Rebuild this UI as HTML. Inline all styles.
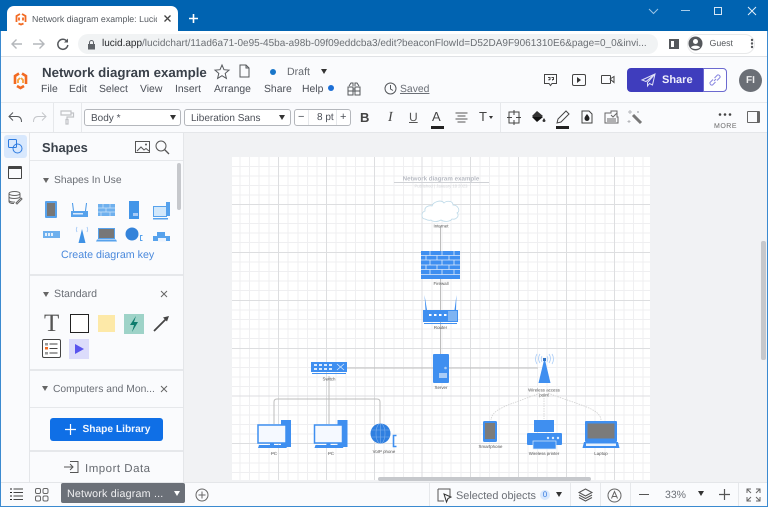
<!DOCTYPE html>
<html><head><meta charset="utf-8"><style>
*{box-sizing:border-box}
html,body{margin:0;padding:0;width:768px;height:507px;overflow:hidden;background:#fff;font-family:"Liberation Sans",sans-serif;text-rendering:geometricPrecision}
.a{position:absolute;white-space:nowrap}
svg{position:absolute;overflow:visible}
.m{top:83px;font-size:10.400px;line-height:13px;color:#4c5058}
.h{font-size:10.300px;color:#6b6f76}
.sel{top:109px;height:17px;border:1px solid #b4b7bc;border-radius:3px;background:#fff;font-size:10px;color:#4c5058;line-height:17px;padding-left:6px}
.ar{width:0;height:0;border-left:3.500px solid transparent;border-right:3.500px solid transparent;border-top:5px solid #333}
.ln{background:#e6e8eb}
</style></head><body>
<div class="a" style="left:0;top:0;width:768px;height:507px;background:#fff;overflow:hidden;filter:blur(.3px)">

<!-- title bar -->
<div class="a" style="left:0;top:0;width:768px;height:31px;background:#0063b1"></div>
<div class="a" style="left:7px;top:6px;width:171px;height:25px;background:#fff;border-radius:7px 7px 0 0"></div>
<svg style="left:15px;top:13px" width="12" height="12" viewBox="0 0 12 12"><path d="M5 1 1.500 3v6M7 1l3.500 2v6M3.500 10.500l2.500 1 2.500-1M4 4.500v3M8 4.500v3" fill="none" stroke="#f26a22" stroke-width="1.800"/></svg>
<div class="a" style="left:32px;top:13px;width:125px;overflow:hidden;font-size:8.800px;color:#555a60;line-height:12px">Network diagram example: Lucid</div>
<svg style="left:163px;top:14px" width="10" height="10"><path d="M1.500 1.500l6 6m0-6l-6 6" stroke="#444" stroke-width="1.300"/></svg>
<svg style="left:188px;top:13px" width="12" height="12"><path d="M5.500 1v9M1 5.500h9" stroke="#fff" stroke-width="1.600"/></svg>
<svg style="left:648px;top:6px" width="12" height="10"><path d="M1 3l4.500 4.500L10 3" fill="none" stroke="#9cc4e6" stroke-width="1"/></svg>
<div class="a" style="left:681px;top:10px;width:9px;height:1px;background:#a9cdea"></div>
<div class="a" style="left:714px;top:7px;width:8px;height:8px;border:1px solid #d6e6f4"></div>
<svg style="left:746px;top:5px" width="12" height="12"><path d="M2 2l8 8m0-8l-8 8" stroke="#e5eff8" stroke-width="1"/></svg>

<!-- address bar -->
<div class="a" style="left:0;top:31px;width:768px;height:26px;background:#fff;border-bottom:1px solid #e0e2e5"></div>
<svg style="left:10px;top:37px" width="14" height="14"><path d="M12 7H2m4.500-4.500L2 7l4.500 4.500" fill="none" stroke="#b4b7bb" stroke-width="1.400"/></svg>
<svg style="left:32px;top:37px" width="14" height="14"><path d="M1 7h10M7.500 2.500 12 7l-4.500 4.500" fill="none" stroke="#b4b7bb" stroke-width="1.400"/></svg>
<svg style="left:56px;top:37px" width="14" height="14"><path d="M11 4.500A5 5 0 1 0 11.800 8" fill="none" stroke="#55585c" stroke-width="1.500"/><path d="M12 1.500v4H8z" fill="#55585c"/></svg>
<div class="a" style="left:78px;top:34px;width:580px;height:20px;border-radius:10px;background:#f1f3f4"></div>
<svg style="left:87px;top:39px" width="9" height="11"><path d="M1 5h7v5.500H1z" fill="#5f6368"/><path d="M2.500 5V3.500a2 2 0 0 1 4 0V5" fill="none" stroke="#5f6368" stroke-width="1"/></svg>
<div class="a" style="left:102px;top:37px;font-size:10px;color:#6b6f74;line-height:13px"><span style="color:#26282b">lucid.app</span>/lucidchart/11ad6a71-0e95-45ba-a98b-09f09eddcba3/edit?beaconFlowId=D52DA9F9061310E6&amp;page=0_0&amp;invi...</div>
<div class="a" style="left:669px;top:39px;width:10px;height:10px;border:2px solid #55585c;border-right-width:5px"></div>
<div class="a" style="left:687px;top:34px;width:68px;height:20px;border:1px solid #e8e9ea;border-radius:10px"></div>
<svg style="left:688px;top:36px" width="15" height="15" viewBox="0 0 15 15"><circle cx="7.500" cy="7.500" r="7" fill="#55585c"/><circle cx="7.500" cy="5.500" r="2.500" fill="#fff"/><path d="M3 11.500c1-2.500 8-2.500 9 0-2 2-7 2-9 0z" fill="#fff"/></svg>
<div class="a" style="left:709.500px;top:37px;font-size:8.800px;color:#55585c;line-height:13px">Guest</div>
<svg style="left:750px;top:38px" width="4" height="12"><circle cx="2" cy="2" r="1.200" fill="#55585c"/><circle cx="2" cy="5.500" r="1.200" fill="#55585c"/><circle cx="2" cy="9" r="1.200" fill="#55585c"/></svg>

<!-- app header -->
<div class="a" style="left:1px;top:57px;width:766px;height:45px;background:#fafbfd"></div>
<svg style="left:13px;top:72px" width="15" height="17" viewBox="0 0 15 17"><path d="M6 1.500 2 4v8M9 1.500 13 4v8M4 14l3.500 2 3.500-2" fill="none" stroke="#f26a22" stroke-width="2.600"/><path d="M7 6 5 8v3M8 6l2 2v3" fill="none" stroke="#f9a33a" stroke-width="1.800"/></svg>
<div class="a" style="left:42px;top:63.500px;font-size:13.300px;font-weight:700;color:#3a414a;line-height:17px">Network diagram example</div>
<svg style="left:214px;top:64px" width="16" height="15" viewBox="0 0 16 15"><path d="M8 1l2 4.700 5 .4-3.800 3.300 1.200 5L8 11.700l-4.400 2.700 1.200-5L1 6.100l5-.4z" fill="none" stroke="#55585c" stroke-width="1"/></svg>
<svg style="left:239px;top:64px" width="11" height="14"><path d="M1 1h6l3 3v9H1zM7 1v3h3" fill="none" stroke="#55585c" stroke-width="1"/></svg>
<div class="a" style="left:270px;top:69px;width:6px;height:6px;border-radius:50%;background:#1976c9"></div>
<div class="a" style="left:287px;top:66px;font-size:10.600px;color:#666a70;line-height:13px">Draft</div>
<div class="a ar" style="left:321px;top:69px"></div>
<div class="a m" style="left:41px">File</div>
<div class="a m" style="left:69px">Edit</div>
<div class="a m" style="left:99px">Select</div>
<div class="a m" style="left:140px">View</div>
<div class="a m" style="left:175px">Insert</div>
<div class="a m" style="left:214px">Arrange</div>
<div class="a m" style="left:264px">Share</div>
<div class="a m" style="left:302px">Help</div>
<div class="a" style="left:328px;top:85px;width:6px;height:6px;border-radius:50%;background:#1c6fd6"></div>
<svg style="left:347px;top:82px" width="14" height="14" viewBox="0 0 14 14"><path d="M2 4l2-3h2v3M8 4V1h2l2 3M1 5h5v8H1zM8 5h5v8H8zM6 7h2M1 9h12" fill="none" stroke="#55585c" stroke-width="1"/></svg>
<svg style="left:384px;top:82px" width="13" height="13"><circle cx="6.500" cy="6.500" r="5.500" fill="none" stroke="#55585c"/><path d="M6.500 3v4l2.500 1.500" fill="none" stroke="#55585c"/></svg>
<div class="a" style="left:400px;top:83px;font-size:10.400px;color:#6b6f76;line-height:14px;text-decoration:underline">Saved</div>
<svg style="left:544px;top:74px" width="13" height="13"><path d="M.5.500h12v9H8l-1.500 2L5 9.500H.5z" fill="none" stroke="#444"/><path d="M4 3.500h2v2H5v1M7.500 3.500h2v2h-1v1" fill="none" stroke="#444"/></svg>
<div class="a" style="left:572px;top:74px;width:14px;height:12px;border:1px solid #444;border-radius:2px"></div>
<div class="a" style="left:577px;top:77px;width:0;height:0;border-left:4px solid #333;border-top:3px solid transparent;border-bottom:3px solid transparent"></div>
<div class="a" style="left:601px;top:75px;width:10px;height:9px;border:1px solid #444;border-radius:1px"></div>
<svg style="left:610px;top:75px" width="5" height="9"><path d="M0 4l4-2.500v6z" fill="none" stroke="#444"/></svg>
<div class="a" style="left:627px;top:68px;width:77px;height:24px;background:#3f3dbd;border-radius:4px 0 0 4px"></div>
<svg style="left:641px;top:73px" width="15" height="14" viewBox="0 0 15 14"><path d="M14 1 1 7l4 1.500L14 1 6.500 9.500V13l2-2.500 3 1.500z" fill="none" stroke="#dfe0f6" stroke-width="1"/></svg>
<div class="a" style="left:662px;top:73px;font-size:11px;font-weight:700;color:#eeeefb;line-height:14px">Share</div>
<div class="a" style="left:703px;top:68px;width:24px;height:24px;background:#fff;border:1px solid #6c6ad0;border-radius:0 4px 4px 0"></div>
<svg style="left:708px;top:73px" width="14" height="14" viewBox="0 0 14 14"><path d="M6 8 8 6M5 6.500l-3 3a2 2 0 0 0 2.500 2.500l3-3M9 7.500l3-3A2 2 0 0 0 9.500 2l-3 3" fill="none" stroke="#8987e0" stroke-width="1"/></svg>
<div class="a" style="left:739px;top:69px;width:23px;height:23px;border-radius:50%;background:#6b6f76;color:#eee;font-size:10px;font-weight:700;text-align:center;line-height:23px">FI</div>

<!-- toolbar -->
<div class="a" style="left:1px;top:102px;width:766px;height:31px;background:#fafbfd;border-top:1px solid #e8eaed;border-bottom:1px solid #e4e6e9"></div>
<div class="a ln" style="left:53px;top:103px;width:1px;height:29px"></div>
<div class="a ln" style="left:81px;top:103px;width:1px;height:29px"></div>
<div class="a ln" style="left:500px;top:103px;width:1px;height:29px"></div>
<svg style="left:8px;top:111px" width="15" height="13"><path d="M5 1.500 1 5.500l4 4M1 5.500h8c3 0 4.500 2 4.500 5.500" fill="none" stroke="#55585c" stroke-width="1"/></svg>
<svg style="left:32px;top:111px" width="15" height="13"><path d="M10 1.500l4 4-4 4M14 5.500H6c-3 0-4.500 2-4.500 5.500" fill="none" stroke="#c4c6ca" stroke-width="1"/></svg>
<svg style="left:60px;top:110px" width="15" height="15"><path d="M1 1h10v4H1zM11 3h2.500v4H7v2.500M6 9.500h2V14H6z" fill="none" stroke="#c0c2c6" stroke-width="1.200"/></svg>
<div class="a sel" style="left:84px;width:97px">Body *</div><div class="a ar" style="left:170px;top:115px"></div>
<div class="a sel" style="left:184px;width:107px">Liberation Sans</div><div class="a ar" style="left:279px;top:115px"></div>
<div class="a sel" style="left:294px;width:57px;padding:0"></div>
<div class="a ln" style="left:308px;top:110px;width:1px;height:15px"></div><div class="a ln" style="left:336px;top:110px;width:1px;height:15px"></div>
<div class="a" style="left:298px;top:110px;font-size:11px;color:#4c5058;line-height:15px">−</div>
<div class="a" style="left:317px;top:110px;font-size:10px;color:#4c5058;line-height:15px">8 pt</div>
<div class="a" style="left:340px;top:110px;font-size:11px;color:#4c5058;line-height:15px">+</div>
<div class="a" style="left:360px;top:110px;font-size:13px;font-weight:700;color:#444;line-height:15px">B</div>
<div class="a" style="left:388px;top:109px;font-size:14px;font-family:'Liberation Serif',serif;font-style:italic;color:#444;line-height:17px">I</div>
<div class="a" style="left:409px;top:110px;font-size:12px;color:#555;line-height:14px;text-decoration:underline">U</div>
<div class="a" style="left:432px;top:110px;font-size:13px;color:#444;line-height:14px">A</div>
<div class="a" style="left:431px;top:126px;width:13px;height:3px;background:#222"></div>
<svg style="left:455px;top:112px" width="13" height="11"><path d="M.5 1h12M2.500 4h8M.5 7h12M2.500 10h8" stroke="#555" stroke-width="1"/></svg>
<div class="a" style="left:479px;top:110px;font-size:13px;color:#444;line-height:14px">T</div><div class="a ar" style="left:489px;top:116px;border-width:3px 2px 0;"></div>
<svg style="left:507px;top:110px" width="14" height="15"><path d="M2 2h10v11H2zM7 0v5M7 10v5M0 7.500h5M9 7.500h5" fill="none" stroke="#444" stroke-width="1"/></svg>
<svg style="left:531px;top:110px" width="15" height="15"><path d="M6 1 1 6l5 5 6-5z" fill="#333"/><path d="M1 7h11l-6 5z" fill="#111"/><path d="M13 8l1.500 2.500a1.500 1.500 0 1 1-3 0z" fill="#333"/></svg>
<svg style="left:556px;top:110px" width="14" height="14"><path d="M1 13l1-4 8-8 3 3-8 8z" fill="none" stroke="#444"/></svg>
<div class="a" style="left:556px;top:126px;width:13px;height:3px;background:#222"></div>
<svg style="left:581px;top:110px" width="12" height="14"><path d="M1 1h7l3 3v9H1z" fill="none" stroke="#444"/><path d="M6 4c2 2.500 2.500 3.500 2.500 4.500a2.500 2.500 0 0 1-5 0C3.500 7.500 4 6.500 6 4z" fill="#222"/></svg>
<svg style="left:604px;top:110px" width="15" height="14"><path d="M1 3h6v-2h6v6h1v6H1z" fill="none" stroke="#666"/><path d="M3 9h9M3 11h9M7 5l2 2 4-4" fill="none" stroke="#666"/></svg>
<svg style="left:627px;top:110px" width="16" height="16"><path d="M6 5l8 8" stroke="#777" stroke-width="3"/><path d="M3 0v4M1 2h4M2 10v3M.5 11.500h3M11 1v2M10 2h2" stroke="#b5b7bb"/></svg>
<svg style="left:718px;top:113px" width="15" height="4"><circle cx="2" cy="1.500" r="1.300" fill="#444"/><circle cx="7" cy="1.500" r="1.300" fill="#444"/><circle cx="12" cy="1.500" r="1.300" fill="#444"/></svg>
<div class="a" style="left:714px;top:122px;font-size:7px;color:#666;letter-spacing:.5px;line-height:9px">MORE</div>
<div class="a" style="left:747px;top:111px;width:13px;height:12px;border:1px solid #666;border-right-width:3px;border-radius:1px"></div>

<!-- left rail -->
<div class="a" style="left:1px;top:133px;width:29px;height:349px;background:#fafbfd;border-right:1px solid #e4e6e9"></div>
<div class="a" style="left:4px;top:135px;width:23px;height:23px;background:#d8e8fd;border-radius:3px"></div>
<svg style="left:8px;top:139px" width="15" height="15"><rect x=".500" y=".500" width="8" height="8" rx="1" fill="none" stroke="#2d7be0"/><circle cx="9.500" cy="9.500" r="4.500" fill="none" stroke="#2d7be0"/></svg>
<div class="a" style="left:8px;top:166px;width:14px;height:13px;border:1px solid #444;border-top-width:3px;border-radius:1px"></div>
<svg style="left:8px;top:191px" width="15" height="15"><ellipse cx="6.500" cy="2.500" rx="5.500" ry="2" fill="none" stroke="#666"/><path d="M1 2.500v8c0 1.500 3 2.200 5 2M1 6c1 2 9 2 11 0M1 9.500c1 1.500 4 1.800 6 1.500M12 2.500v4M8 12l5-5 1 1-5 5z" fill="none" stroke="#666"/></svg>

<!-- shapes panel -->
<div class="a" style="left:30px;top:133px;width:154px;height:349px;background:#fafbfd;border-right:1px solid #e4e6e9"></div>
<div class="a" style="left:42px;top:140px;font-size:12.900px;font-weight:700;color:#3a414a;line-height:15px">Shapes</div>
<svg style="left:135px;top:141px" width="15" height="12"><rect x=".500" y=".500" width="14" height="11" fill="none" stroke="#555"/><path d="M2 10l4-4 3 3 2-1.500 3 2.500" fill="none" stroke="#555"/><circle cx="11" cy="3.500" r="1" fill="#555"/></svg>
<svg style="left:155px;top:140px" width="15" height="15"><circle cx="6" cy="6" r="5" fill="none" stroke="#555"/><path d="M9.500 9.500l4.500 4.500" stroke="#555" stroke-width="1.300"/></svg>
<div class="a ln" style="left:30px;top:160px;width:153px;height:1px"></div>
<div class="a ar" style="left:43px;top:178px;border-top-color:#666"></div>
<div class="a h" style="left:54px;top:174px;line-height:14px">Shapes In Use</div>
<div class="a" style="left:177px;top:163px;width:4px;height:47px;background:#c6c8cc;border-radius:2px"></div>

<svg style="left:0;top:0" width="184" height="270" viewBox="0 0 184 270">
<g fill="#57a2ec">
<rect x="45" y="201" width="12" height="17" rx="1"/><rect x="47" y="203" width="8" height="13" fill="#777"/>
<path d="M71 211h17v6H71z"/><path d="M72 203l1 8h1l-1-8zM87 203l-1 8h-1l1-8z" fill="#4295e8"/><path d="M73 213h10v1.500H73z" fill="#dcebfc"/>
<rect x="98" y="204" width="17" height="12" fill="#6eb0ee"/><path d="M98 208h17M98 212h17M103 204v4M110 204v4M106 208v4M101 212v4M110 212v4" stroke="#cfe3f8" stroke-width=".7" fill="none"/>
<rect x="129" y="201" width="10" height="18" fill="#4295e8"/><rect x="133" y="213" width="5" height="3" fill="#a9ccf7"/>
<rect x="166" y="202" width="4" height="14"/><rect x="153.500" y="206.500" width="13" height="10" fill="#d2e8fb" stroke="#57a2ec"/><path d="M153 218h15v1.500h-15z"/>
<rect x="43" y="231" width="17" height="7" fill="#6eb0ee"/><path d="M45 233h2v3h-2zM48 233h2v3h-2zM51 233h2v3h-2z" fill="#e3effb"/>
<path d="M82 229l3.500 14h-7z" fill="#3f92e5"/><path d="M77 227c-1 2-1 3 0 5M87 227c1 2 1 3 0 5" fill="none" stroke="#a9ccf7"/>
<rect x="98.500" y="228.500" width="16" height="10" fill="#777" stroke="#57a2ec"/><path d="M97 239.500h19l1 2H96z"/>
<circle cx="132" cy="234" r="6.500" fill="#3483da"/><path d="M140 235h2.500v1h-1.500v4h1.500v1H140z" fill="#57a2ec"/>
<path d="M157 232h8v4h5v5h-17v-5h4z"/><rect x="158" y="238" width="8" height="3.500" fill="#eaf3fe"/>
</g></svg>
<div class="a" style="left:61px;top:248px;font-size:10.700px;color:#4a89dc;line-height:14px">Create diagram key</div>
<div class="a ln" style="left:30px;top:274px;width:153px;height:1.500px"></div>
<div class="a ar" style="left:43px;top:292px;border-top-color:#666"></div>
<div class="a h" style="left:54px;top:287px;line-height:14px;font-size:10.600px">Standard</div>
<svg style="left:160px;top:290px" width="8" height="8"><path d="M1 1l6 6m0-6L1 7" stroke="#666"/></svg>
<div class="a" style="left:44px;top:310px;font-family:'Liberation Serif',serif;font-size:25px;color:#555;line-height:28px">T</div>
<div class="a" style="left:70px;top:314px;width:19px;height:19px;border:1.500px solid #222;background:#fff"></div>
<div class="a" style="left:98px;top:315px;width:17px;height:17px;background:#fde9a8"></div>
<div class="a" style="left:124px;top:314px;width:20px;height:20px;background:#9ed3c8"></div>
<svg style="left:127px;top:315px" width="14" height="18"><path d="M9 1 3 10h4l-2 7 6-10H7z" fill="#0e7c6d"/></svg>
<svg style="left:152px;top:315px" width="18" height="18"><path d="M2 16 14 4" stroke="#444" stroke-width="1.800"/><path d="M17 1l-6 1.500 4 4z" fill="#444"/></svg>
<div class="a" style="left:42px;top:339px;width:19px;height:19px;border:1.300px solid #444;border-radius:2px;background:#fff"></div>
<svg style="left:45px;top:342px" width="14" height="14"><path d="M4.500 2h8M4.500 6.500h8M4.500 11h8" stroke="#444"/><rect x="0" y="1" width="3" height="2.500" fill="#999"/><rect x="0" y="5" width="3" height="2.500" fill="#f26a22"/><rect x="0" y="10" width="3" height="2.500" fill="#999"/></svg>
<div class="a" style="left:69px;top:339px;width:20px;height:20px;background:#dcdcfb"></div>
<div class="a" style="left:75px;top:344px;width:0;height:0;border-left:9px solid #5a55ee;border-top:5px solid transparent;border-bottom:5px solid transparent"></div>
<div class="a ln" style="left:30px;top:369px;width:153px;height:1.500px"></div>
<div class="a ar" style="left:42px;top:386px;border-top-color:#666"></div>
<div class="a h" style="left:53px;top:383px;line-height:14px">Computers and Mon...</div>
<svg style="left:160px;top:385px" width="8" height="8"><path d="M1 1l6 6m0-6L1 7" stroke="#666"/></svg>
<div class="a ln" style="left:30px;top:407px;width:153px;height:1px"></div>
<div class="a" style="left:50px;top:418px;width:113px;height:23px;background:#0f6fe6;border-radius:3px"></div>
<svg style="left:65px;top:424px" width="11" height="11"><path d="M5.500 0v11M0 5.500h11" stroke="#fff" stroke-width="1.200"/></svg>
<div class="a" style="left:82.500px;top:423px;font-size:10.200px;font-weight:700;color:#f2f7fe;line-height:13px">Shape Library</div>
<div class="a ln" style="left:30px;top:450px;width:153px;height:1.500px"></div>
<svg style="left:64px;top:461px" width="15" height="12"><path d="M0 6h9M6 3l3 3-3 3M6 .500h8v11H6" fill="none" stroke="#555"/></svg>
<div class="a" style="left:85px;top:462px;font-size:11.500px;color:#666a70;line-height:14px;letter-spacing:.5px">Import Data</div>

<!-- canvas bg -->
<div class="a" style="left:184px;top:133px;width:583px;height:349px;background:#f1f2f4"></div>
<div class="a" style="left:232px;top:157px;width:418px;height:323px;background:#fff"></div>
<svg style="left:232px;top:157px" width="418" height="323" viewBox="232 157 418 323">
<g stroke="#efeff1" stroke-width="1">
<path d="M240 157v323M249.500 157v323M259 157v323M269 157v323M288 157v323M298 157v323M307.500 157v323M317 157v323M336 157v323M346 157v323M355.500 157v323M365 157v323M384 157v323M394 157v323M403.500 157v323M413 157v323M432 157v323M442 157v323M451 157v323M461 157v323M480 157v323M489.500 157v323M499 157v323M509 157v323M528 157v323M537.500 157v323M547 157v323M557 157v323M576 157v323M585.500 157v323M595 157v323M605 157v323M624 157v323M633.500 157v323M643 157v323"/>
<path d="M232 166.500h418M232 176h418M232 185.500h418M232 195h418M232 214h418M232 223.500h418M232 233h418M232 242.500h418M232 262h418M232 271.500h418M232 281h418M232 290.500h418M232 310h418M232 319.500h418M232 329h418M232 338.500h418M232 358h418M232 367.500h418M232 377h418M232 386.500h418M232 405.500h418M232 415h418M232 424.500h418M232 434h418M232 453.500h418M232 463h418M232 472.500h418"/>
</g>
<g stroke="#dddee0" stroke-width="1"><path d="M278.500 157v323M326.500 157v323M374.500 157v323M422 157v323M470.500 157v323M518.500 157v323M566.500 157v323M614.500 157v323M232 204.500h418M232 252.500h418M232 300.500h418M232 348.500h418M232 396h418M232 443.500h418"/></g>
<g fill="none" stroke="#bdbdbd" stroke-width="1">
<path d="M440.500 226v90M440.500 320v34M346 368h87M448 368h90M329 376v23M329 399h-52q-3 0-3 3v22M329 399v25M329 399h48q3 0 3 3v22"/>
</g>
<g fill="none" stroke="#cfcfcf" stroke-width=".8" stroke-dasharray="1.500 1"><path d="M540 393C510 405 492 408 491 420M544 393v26M548 393c30 12 52 15 53 27"/></g>
<text x="441" y="180.500" text-anchor="middle" font-size="6.200" font-weight="700" fill="#b9bcc4" font-family="Liberation Sans">Network diagram example</text>
<rect x="394" y="182" width="95" height="1" fill="#d0d2d6"/>
<text x="441" y="187.500" text-anchor="middle" font-size="4.200" fill="#d0d2d6" font-family="Liberation Sans">Published  |  January 18 2023</text>
<path d="M425 219c-4 0-4-7 0-8-1-4 4-6 7-5 1-4 9-7 12-3 3-3 9-2 9 2 5 0 8 6 4 8 3 3-1 7-5 6-2 3-8 3-11 1-3 2-8 2-10 0-2 1-4 0-6-1z" fill="#fff" stroke="#bcd9e8" stroke-width=".8"/>
<g font-size="4.400" fill="#555" font-family="Liberation Sans" text-anchor="middle">
<text x="441" y="227.500">Internet</text>
<text x="441" y="285">Firewall</text>
<text x="440.500" y="329">Router</text>
<text x="441" y="389">Server</text>
<text x="329" y="380.500">Switch</text>
<text x="274" y="455">PC</text>
<text x="331" y="455">PC</text>
<text x="384" y="453">VoIP phone</text>
<text x="544" y="391.500">Wireless access</text>
<text x="544" y="396.500">point</text>
<text x="490.500" y="448">Smartphone</text>
<text x="544" y="455">Wireless printer</text>
<text x="601" y="455">Laptop</text>
</g>
<rect x="421" y="251" width="39" height="28" fill="#3f8ff0"/>
<g stroke="#dfeafa" stroke-width=".8" fill="none"><path d="M421 255.500h39M421 260h39M421 265h39M421 269.500h39M421 274.500h39M430 251v4.500M442 251v4.500M454 251v4.500M426 255.500V260M437 255.500V260M449 255.500V260M430 260v5M442 260v5M454 260v5M426 265v4.500M437 265v4.500M449 265v4.500M430 269.500v5M442 269.500v5M454 269.500v5"/></g>
<rect x="423" y="310" width="35" height="12" fill="#3f8ff0"/><path d="M424.500 295l2.500 15h-1.500zM456.500 295l-2 15h1.500z" fill="#3f8ff0"/><rect x="424" y="323" width="33" height="1" fill="#3f8ff0"/>
<g fill="#fff"><rect x="429" y="314" width="2.500" height="2"/><rect x="434" y="314" width="2.500" height="2"/><rect x="439" y="314" width="2.500" height="2"/><rect x="444" y="314" width="2.500" height="2"/></g>
<rect x="448" y="311" width="9" height="10" fill="#7fb4f2"/>
<rect x="433" y="354" width="16" height="29" rx="1" fill="#3f8ff0"/><circle cx="445.500" cy="368" r="1.300" fill="#a9ccf7"/><rect x="439" y="373" width="8" height="5" fill="#a9ccf7"/>
<rect x="311" y="362" width="36" height="10" fill="#3f8ff0"/><rect x="312" y="373" width="34" height="1" fill="#3f8ff0"/>
<g fill="#dcebfc"><rect x="314" y="364" width="3" height="2"/><rect x="319" y="364" width="3" height="2"/><rect x="324" y="364" width="3" height="2"/><rect x="329" y="364" width="3" height="2"/><rect x="314" y="368" width="3" height="2"/><rect x="319" y="368" width="3" height="2"/><rect x="324" y="368" width="3" height="2"/><rect x="329" y="368" width="3" height="2"/></g>
<path d="M337 364l7 6m0-6l-7 6" stroke="#dcebfc" stroke-width=".8"/>
<g><rect x="281" y="420" width="10" height="27" fill="#3f8ff0"/><rect x="258" y="425" width="28" height="18" fill="#f5f9ff" stroke="#3f8ff0" stroke-width="1.500"/><path d="M270 443h4v2h-4zM259 445h26l2 3h-29z" fill="#3f8ff0"/></g>
<g transform="translate(56.500 0)"><rect x="281" y="420" width="10" height="27" fill="#3f8ff0"/><rect x="258" y="425" width="28" height="18" fill="#f5f9ff" stroke="#3f8ff0" stroke-width="1.500"/><path d="M270 443h4v2h-4zM259 445h26l2 3h-29z" fill="#3f8ff0"/></g>
<circle cx="380.500" cy="433.500" r="10" fill="#2f7fe0"/><g fill="none" stroke="#7fb0ec" stroke-width=".6"><ellipse cx="380.500" cy="433.500" rx="4.500" ry="10"/><path d="M380.500 423.500v20M371 430h19M371 437h19"/></g>
<path d="M396.500 435.500h-3v11h3" fill="none" stroke="#3f8ff0" stroke-width="1.600"/>
<path d="M544.500 358l6 25h-12z" fill="#3f8ff0"/><rect x="543" y="358" width="3" height="3" fill="#3173c4"/>
<g fill="none" stroke="#a9ccf7" stroke-width=".8"><path d="M540 354c-2 3-2 6 0 9M542 356c-1 2-1 4 0 6M549 354c2 3 2 6 0 9M547 356c1 2 1 4 0 6M537 354c-2 3-2 7 0 10M552 354c2 3 2 7 0 10"/></g>
<rect x="483" y="421" width="14" height="21" rx="1.500" fill="#3f8ff0"/><rect x="485" y="423" width="10" height="16" fill="#7b7b7b"/>
<rect x="534" y="420" width="20" height="12" fill="#3f8ff0"/><rect x="527" y="433" width="35" height="12" rx="1" fill="#3f8ff0"/><rect x="533" y="441" width="23" height="8" fill="#3f8ff0" stroke="#dcebfc" stroke-width=".7"/><g fill="#dcebfc"><circle cx="548" cy="438" r="1.200"/><circle cx="553" cy="438" r="1.200"/><circle cx="558" cy="438" r="1.200"/></g>
<rect x="585" y="421" width="32" height="21" rx="1" fill="#3f8ff0"/><rect x="587.500" y="423.500" width="27" height="15" fill="#7b7b7b"/><path d="M584 442h34l1.500 6h-37z" fill="#3f8ff0"/><rect x="586" y="443.500" width="30" height="2.500" fill="#eaf3fe"/>
</svg>
<div class="a" style="left:378px;top:477px;width:213px;height:4px;background:#c6c8cc;border-radius:2px"></div>
<div class="a" style="left:761px;top:241px;width:5px;height:119px;background:#c6c8cc;border-radius:2px"></div>

<!-- bottom bar -->
<div class="a" style="left:1px;top:482px;width:766px;height:24px;background:#fafbfd;border-top:1px solid #e4e6e9"></div>
<svg style="left:10px;top:488px" width="14" height="13"><path d="M3.500 1H13M3.500 4.500H13M3.500 8H13M3.500 11.500H13" stroke="#444"/><path d="M0 1h2M0 4.500h2M0 8h2M0 11.500h2" stroke="#222"/></svg>
<svg style="left:35px;top:488px" width="14" height="14"><rect x=".500" y=".500" width="5" height="5" rx="1.500" fill="none" stroke="#666"/><rect x="8" y=".500" width="5" height="5" rx="1.500" fill="none" stroke="#666"/><rect x=".500" y="8" width="5" height="5" rx="1.500" fill="none" stroke="#666"/><rect x="8" y="8" width="5" height="5" rx="1.500" fill="none" stroke="#666"/></svg>
<div class="a" style="left:61px;top:483px;width:124px;height:20px;background:#6b7078;border-radius:2px;color:#f0f0f2;font-size:10.700px;line-height:22px;padding-left:6px;letter-spacing:.2px">Network diagram ...</div>
<div class="a ar" style="left:174px;top:491px;border-top-color:#fff"></div>
<svg style="left:195px;top:488px" width="14" height="14"><circle cx="7" cy="7" r="6" fill="none" stroke="#666"/><path d="M7 3.500v7M3.500 7h7" stroke="#666"/></svg>
<div class="a ln" style="left:429px;top:483px;width:1px;height:23px"></div>
<svg style="left:437px;top:488px" width="16" height="15"><path d="M1 1h12v8M1 1v12h6" fill="none" stroke="#555"/><path d="M7 6l7 3-3 1.500L9.500 14z" fill="none" stroke="#333"/></svg>
<div class="a" style="left:456px;top:490px;font-size:10.900px;color:#6b6f76;line-height:13px">Selected objects</div>
<div class="a" style="left:540px;top:490px;width:10px;height:10px;border-radius:50%;background:#d8e8fd;color:#3a7de0;font-size:8px;text-align:center;line-height:10px">0</div>
<div class="a ar" style="left:556px;top:492px"></div>
<div class="a ln" style="left:570px;top:483px;width:1px;height:23px"></div>
<svg style="left:578px;top:488px" width="15" height="14"><path d="M7.500 1 14 4.500 7.500 8 1 4.500zM1 7l6.500 3.500L14 7M1 9.500 7.500 13 14 9.500" fill="none" stroke="#555"/></svg>
<div class="a ln" style="left:600px;top:483px;width:1px;height:23px"></div>
<svg style="left:607px;top:488px" width="15" height="15"><circle cx="7.500" cy="7.500" r="6.500" fill="none" stroke="#666"/><path d="M4.500 10.500 7.500 3.500l3 7M5.500 8.500h4" fill="none" stroke="#666"/></svg>
<div class="a ln" style="left:630px;top:483px;width:1px;height:23px"></div>
<div class="a" style="left:639px;top:494px;width:10px;height:1px;background:#555"></div>
<div class="a" style="left:665px;top:489px;font-size:10.500px;color:#6b6f76;line-height:13px">33%</div>
<div class="a ar" style="left:698px;top:491px"></div>
<svg style="left:719px;top:489px" width="11" height="11"><path d="M5.500 0v11M0 5.500h11" stroke="#555" stroke-width="1.200"/></svg>
<div class="a ln" style="left:738px;top:483px;width:1px;height:23px"></div>
<svg style="left:746px;top:488px" width="15" height="14"><path d="M1 5V1h4M1 1l4 4M14 5V1h-4M14 1l-4 4M1 9v4h4M1 13l4-4M14 9v4h-4M14 13l-4-4" fill="none" stroke="#666"/></svg>

<!-- window edges -->
<div class="a" style="left:0;top:31px;width:1px;height:476px;background:#3b8ad0"></div>
<div class="a" style="left:767px;top:31px;width:1px;height:476px;background:#3b8ad0"></div>
<div class="a" style="left:0;top:506px;width:768px;height:1px;background:#3b8ad0"></div>
</div>
</body></html>
